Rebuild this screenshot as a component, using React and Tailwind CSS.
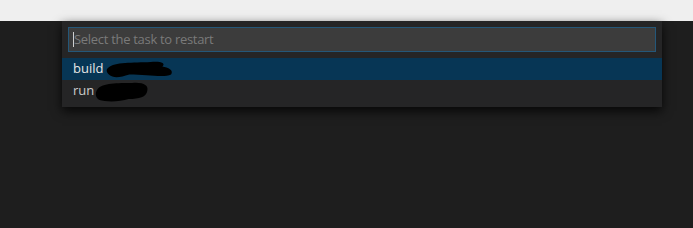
import React from 'react';

const Scribble = ({ className, d }) => (
    <svg className={className} viewBox="0 0 70 20" preserveAspectRatio="none">
        <path d={d} fill="#000" />
    </svg>
);

const Row = ({ label, selected, scribble }) => (
    <div
        className={
            "flex items-center h-[22px] pl-[11px] text-[13px] " +
            (selected ? "bg-[#073655] text-[#e6e6e6]" : "text-[#cccccc]")
        }
    >
        <span>{label}</span>
        {scribble}
    </div>
);

export default function App() {
    return (
        <div className="w-[693px] h-[228px] flex flex-col bg-[#1e1e1e] overflow-hidden" style={{ fontFamily: '"Open Sans", "Noto Sans", sans-serif' }}>
            <div className="h-[21px] bg-[#efefef] shrink-0" />
            <div className="flex-1 pl-[62px]">
                {/* quick pick */}
                <div className="w-[600px] bg-[#252526] pt-[6px] pb-[5px] shadow-[0_4px_10px_rgba(0,0,0,0.8)]">
                    <div className="mx-[6px] h-[25px] border border-[#245779] bg-[#3c3c3c] flex items-center pl-[4px]">
                        <div className="w-px h-[15px] bg-[#cfcfcf]" />
                        <span className="text-[13px] text-[#7a7a7a] tracking-[-0.3px]">Select the task to restart</span>
                    </div>
                    <div className="mt-[6px]">
                        <Row
                            label="build"
                            selected
                            scribble={
                                <Scribble
                                    className="w-[68px] h-[18px] ml-[3px] mt-[2px]"
                                    d="M3 7 C8 1 28 2 46 1 C56 0 62 2 58 6 C64 7 70 10 67 15 C60 19 42 15 24 15 C15 18 8 20 3 15 C0 12 0 9 3 7 Z"
                                />
                            }
                        />
                        <Row
                            label="run"
                            scribble={
                                <Scribble
                                    className="w-[62px] h-[20px] ml-[1px] mt-[1px]"
                                    d="M3 7 C8 1 26 1 42 1 C54 0 61 3 59 9 C58 15 50 17 38 17 C28 20 12 20 5 18 C0 16 0 10 3 7 Z"
                                />
                            }
                        />
                    </div>
                </div>
            </div>
        </div>
    );
}
